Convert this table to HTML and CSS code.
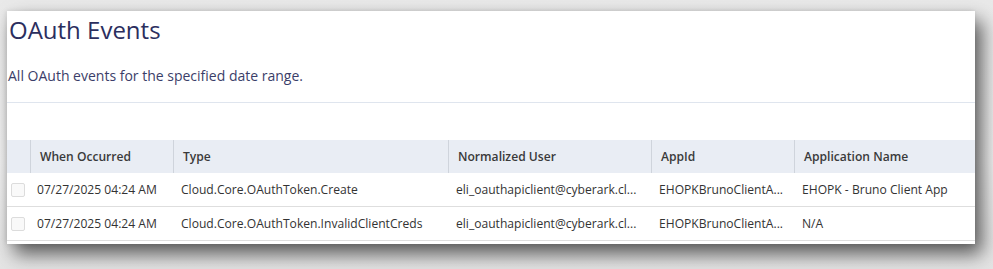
FILE: index.html
```html
<!DOCTYPE html>
<html lang="en">
<head>
  <meta charset="UTF-8">
  <title>OAuth Events</title>
  <link rel="stylesheet" href="styles.css">
</head>
<body>

<div class="panel">
  <div class="page-title">OAuth Events</div>
  <div class="page-desc">All OAuth events for the specified date range.</div>
  <div class="divider"></div>

  <div class="grid">
    <div class="grid-row grid-head">
      <div class="cell col-check"></div>
      <div class="cell col-when">When Occurred</div>
      <div class="cell col-type">Type</div>
      <div class="cell col-user">Normalized User</div>
      <div class="cell col-app">AppId</div>
      <div class="cell col-name">Application Name</div>
    </div>
    <div class="grid-row">
      <div class="cell col-check"><span class="check"></span></div>
      <div class="cell col-when">07/27/2025 04:24 AM</div>
      <div class="cell col-type">Cloud.Core.OAuthToken.Create</div>
      <div class="cell col-user">eli_oauthapiclient@cyberark.cl...</div>
      <div class="cell col-app">EHOPKBrunoClientA...</div>
      <div class="cell col-name">EHOPK - Bruno Client App</div>
    </div>
    <div class="grid-row">
      <div class="cell col-check"><span class="check"></span></div>
      <div class="cell col-when">07/27/2025 04:24 AM</div>
      <div class="cell col-type">Cloud.Core.OAuthToken.InvalidClientCreds</div>
      <div class="cell col-user">eli_oauthapiclient@cyberark.cl...</div>
      <div class="cell col-app">EHOPKBrunoClientA...</div>
      <div class="cell col-name">N/A</div>
    </div>
  </div>
</div>

</body>
</html>
```

FILE: styles.css
```css
html, body {
  margin: 0; padding: 0;
  width: 100%; height: 100%;
  overflow: hidden;
}
body {
  background: linear-gradient(#e9e9e9, #f1f1f1 60%, #e4e4e4);
  font-family: 'Open Sans', 'Liberation Sans', Arial, sans-serif;
  color: #333;
}

.panel {
  margin: 11px 0 0 7px;
  width: 968px;
  height: 233px;
  background: #fff;
  box-shadow: 7px 10px 18px rgba(0,0,0,0.62), -1px 0 5px rgba(0,0,0,0.1);
  display: flex;
  flex-direction: column;
}

.page-title {
  font-size: 24px;
  line-height: 32px;
  color: #2b2e5e;
  padding: 3px 0 0 2px;
}
.page-desc {
  font-size: 14px;
  line-height: 20px;
  color: #3b3e69;
  margin-top: 20px;
  padding-left: 1px;
}
.divider {
  height: 1px;
  background: #dfe5ee;
  margin-top: 16px;
}

/* таблица */
.grid {
  margin-top: 37px;
  font-size: 12.1px;
}
.grid-row {
  display: flex;
  height: 34px;
  align-items: center;
  border-bottom: 1px solid #dedede;
  box-sizing: border-box;
}
.grid-head {
  height: 33px;
  background: #e9edf4;
  border-bottom: none;
  font-weight: 600;
  color: #3a3a3a;
}
.cell {
  padding-left: 7px;
  white-space: nowrap;
  overflow: hidden;
  box-sizing: border-box;
}
.grid-head .cell {
  padding-left: 9px;
  height: 100%;
  display: flex;
  align-items: center;
  border-right: 1px solid #cfd4dc;
}
.grid-head .cell:last-child { border-right: none; }

.col-check { width: 24px; padding-left: 4px; }
.col-when  { width: 143px; }
.grid-row:not(.grid-head) .col-when { padding-left: 6px; }
.col-type  { width: 275px; }
.col-user  { width: 203px; }
.col-app   { width: 143px; }
.col-name  { flex: 1; }

.check {
  display: block;
  width: 12px;
  height: 12px;
  border: 1px solid #dcdcdc;
  border-radius: 2px;
  background: #f9f9f9;
}
```
